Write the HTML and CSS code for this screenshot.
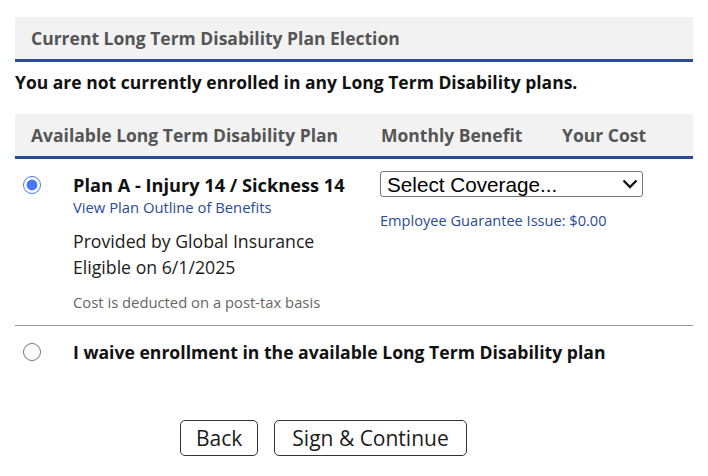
FILE: index.html
```html
<!DOCTYPE html>
<html lang="en">
<head>
    <meta charset="UTF-8">
    <meta name="viewport" content="width=device-width, initial-scale=1.0">
    <title>Long Term Disability Election</title>
    <link rel="stylesheet" href="styles.css">
</head>
<body>
    <div class="page">
        <div class="section-head">
            <div class="head-cell">Current Long Term Disability Plan Election</div>
        </div>
        <p class="notice">You are not currently enrolled in any Long Term Disability plans.</p>

        <div class="section-head plan-head">
            <div class="head-cell">Available Long Term Disability Plan</div>
            <div class="head-cell">Monthly Benefit</div>
            <div class="head-cell">Your Cost</div>
        </div>

        <div class="plan-row">
            <div class="radio-cell">
                <input type="radio" name="plan" id="plan-a" checked>
            </div>
            <div class="plan-info">
                <label class="plan-title" for="plan-a">Plan A - Injury 14 / Sickness 14</label>
                <a href="#" class="plan-link">View Plan Outline of Benefits</a>
                <div class="plan-details">
                    <div>Provided by Global Insurance</div>
                    <div>Eligible on 6/1/2025</div>
                </div>
                <div class="plan-note">Cost is deducted on a post-tax basis</div>
            </div>
            <div class="benefit-cell">
                <div class="select-wrap">
                    <select class="coverage">
                        <option>Select Coverage...</option>
                    </select>
                    <svg class="select-arrow" width="16" height="10" viewBox="0 0 16 10">
                        <path d="M1.5 1.5 L8 8 L14.5 1.5" fill="none" stroke="#111" stroke-width="2.4"/>
                    </svg>
                </div>
                <div class="guarantee">Employee Guarantee Issue: $0.00</div>
            </div>
        </div>

        <div class="plan-row waive-row">
            <div class="radio-cell">
                <input type="radio" name="plan" id="waive">
            </div>
            <label class="plan-title waive-title" for="waive">I waive enrollment in the available Long Term Disability plan</label>
        </div>

        <div class="actions">
            <button type="button" class="back-btn">Back</button>
            <button type="button" class="next-btn">Sign &amp; Continue</button>
        </div>
    </div>
</body>
</html>
```

FILE: styles.css
```css
body {
    font-family: "Open Sans", sans-serif;
    color: #1b1b1b;
    margin: 0;
    background: #fff;
}

.page {
    padding: 17px 15px 0 15px;
}

.section-head {
    background-color: #f2f2f2;
    border-bottom: 3px solid #2a4b96;
    height: 42px;
    display: flex;
    align-items: center;
}

.head-cell {
    padding: 0 16px;
    font-size: 17.5px;
    font-weight: 700;
    color: #555;
}

.plan-head .head-cell:nth-child(1) {
    width: 318px;
}

.plan-head .head-cell:nth-child(2) {
    width: 149px;
}

.notice {
    margin: 0;
    height: 52px;
    line-height: 40px;
    font-size: 17.5px;
    font-weight: 700;
    color: #111;
}

.plan-row {
    display: flex;
    border-bottom: 1px solid #999;
    padding: 13px 0 13px 0;
}

.radio-cell {
    width: 58px;
    padding-left: 8px;
    box-sizing: border-box;
}

.radio-cell input {
    width: 18px;
    height: 18px;
    margin: 4px 0 0 0;
    accent-color: #4677fb;
}

.plan-info {
    width: 307px;
    display: flex;
    flex-direction: column;
}

.plan-title {
    font-size: 18.2px;
    font-weight: 700;
    color: #111;
    line-height: 26px;
}

.waive-title {
    font-size: 17.6px;
}

.plan-link {
    font-size: 14.8px;
    color: #2a4b96;
    text-decoration: none;
    line-height: 18px;
}

.plan-details {
    margin-top: 12px;
    font-size: 17.7px;
    line-height: 26px;
}

.plan-note {
    margin-top: 12px;
    font-size: 14.8px;
    color: #666;
    line-height: 20px;
}

.benefit-cell {
    margin-top: -1px;
}

.select-wrap {
    position: relative;
    width: 263px;
}

.coverage {
    appearance: none;
    width: 263px;
    height: 26px;
    font-family: "Liberation Sans", Arial, sans-serif;
    font-size: 20.7px;
    color: #000;
    border: 1px solid #767676;
    border-radius: 3px;
    background: #fff;
    padding: 0 0 0 6px;
    display: block;
}

.select-arrow {
    position: absolute;
    right: 5px;
    top: 8px;
    pointer-events: none;
}

.guarantee {
    margin-top: 13px;
    font-size: 14.6px;
    line-height: 20px;
    color: #2a4b96;
}

.waive-row {
    border-bottom: none;
}

.actions {
    display: flex;
    gap: 16px;
    padding-left: 165px;
    margin-top: 41px;
}

.actions button {
    font-family: "Open Sans", sans-serif;
    font-size: 21px;
    height: 36px;
    padding: 0 16px;
    background: #fff;
    color: #1b1b1b;
    border: 1px solid #333;
    border-radius: 5px;
    cursor: pointer;
}

.actions .back-btn {
    padding: 0 15px;
}

.actions .next-btn {
    padding: 0 17px;
}
```
